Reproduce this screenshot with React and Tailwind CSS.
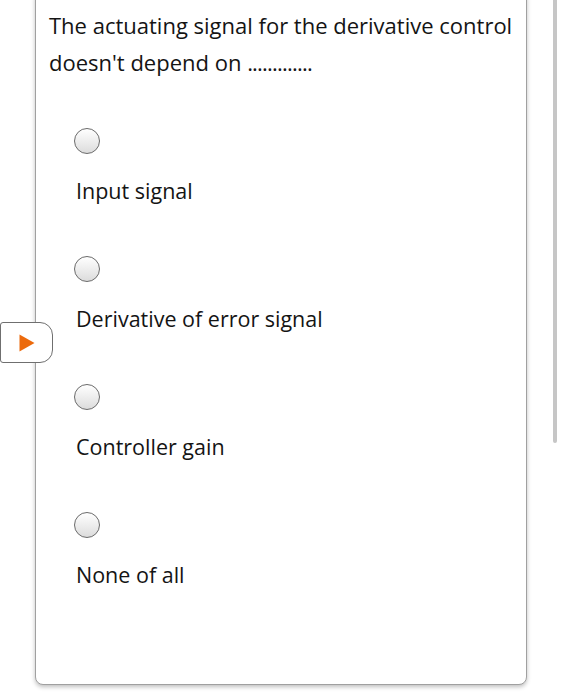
import React from "react";

const options = ["Input signal", "Derivative of error signal", "Controller gain", "None of all"];

function Radio() {
  return (
    <div className="w-[26px] h-[26px] rounded-full border-[1.5px] border-[#6b6b6b] bg-gradient-to-b from-white to-[#dcdcdc]" />
  );
}

export default function App() {
  return (
    <div className="relative w-[562px] h-[700px] bg-white overflow-hidden" style={{ fontFamily: "'Open Sans', Lato, sans-serif" }}>
      <div className="absolute left-[553px] top-0 w-[4px] h-[443px] bg-[#c6c6c6] rounded-b-full" />
      <div className="ml-[35px] w-[492px] -mt-[10px] h-[695px] border border-[#a0a0a0] rounded-[8px] bg-white shadow-[0_2px_4px_rgba(0,0,0,0.25)] text-[#141414]">
        <div className="pl-[13px] pr-[4px] pt-[16px] text-[22px] leading-[37px]">
          The actuating signal for the derivative control doesn't depend on <span className="tracking-[-0.8px]">.............</span>
        </div>
        <div className="pl-[38px] pt-[47px]">
          {options.map((o) => (
            <div key={o} className="mb-[50px]">
              <Radio />
              <div className="mt-[22px] ml-[2px] text-[21.5px] leading-[30px]">{o}</div>
            </div>
          ))}
        </div>
      </div>
      <div className="absolute left-0 top-[322px] w-[53px] h-[41px] border border-[#6f6f6f] bg-white rounded-l-[3px] rounded-r-[13px] flex items-center justify-center">
        <svg width="16" height="18" viewBox="0 0 16 18"><polygon points="0.5,0.5 15.5,9 0.5,17.5" fill="#ec6a0c" /></svg>
      </div>
    </div>
  );
}
